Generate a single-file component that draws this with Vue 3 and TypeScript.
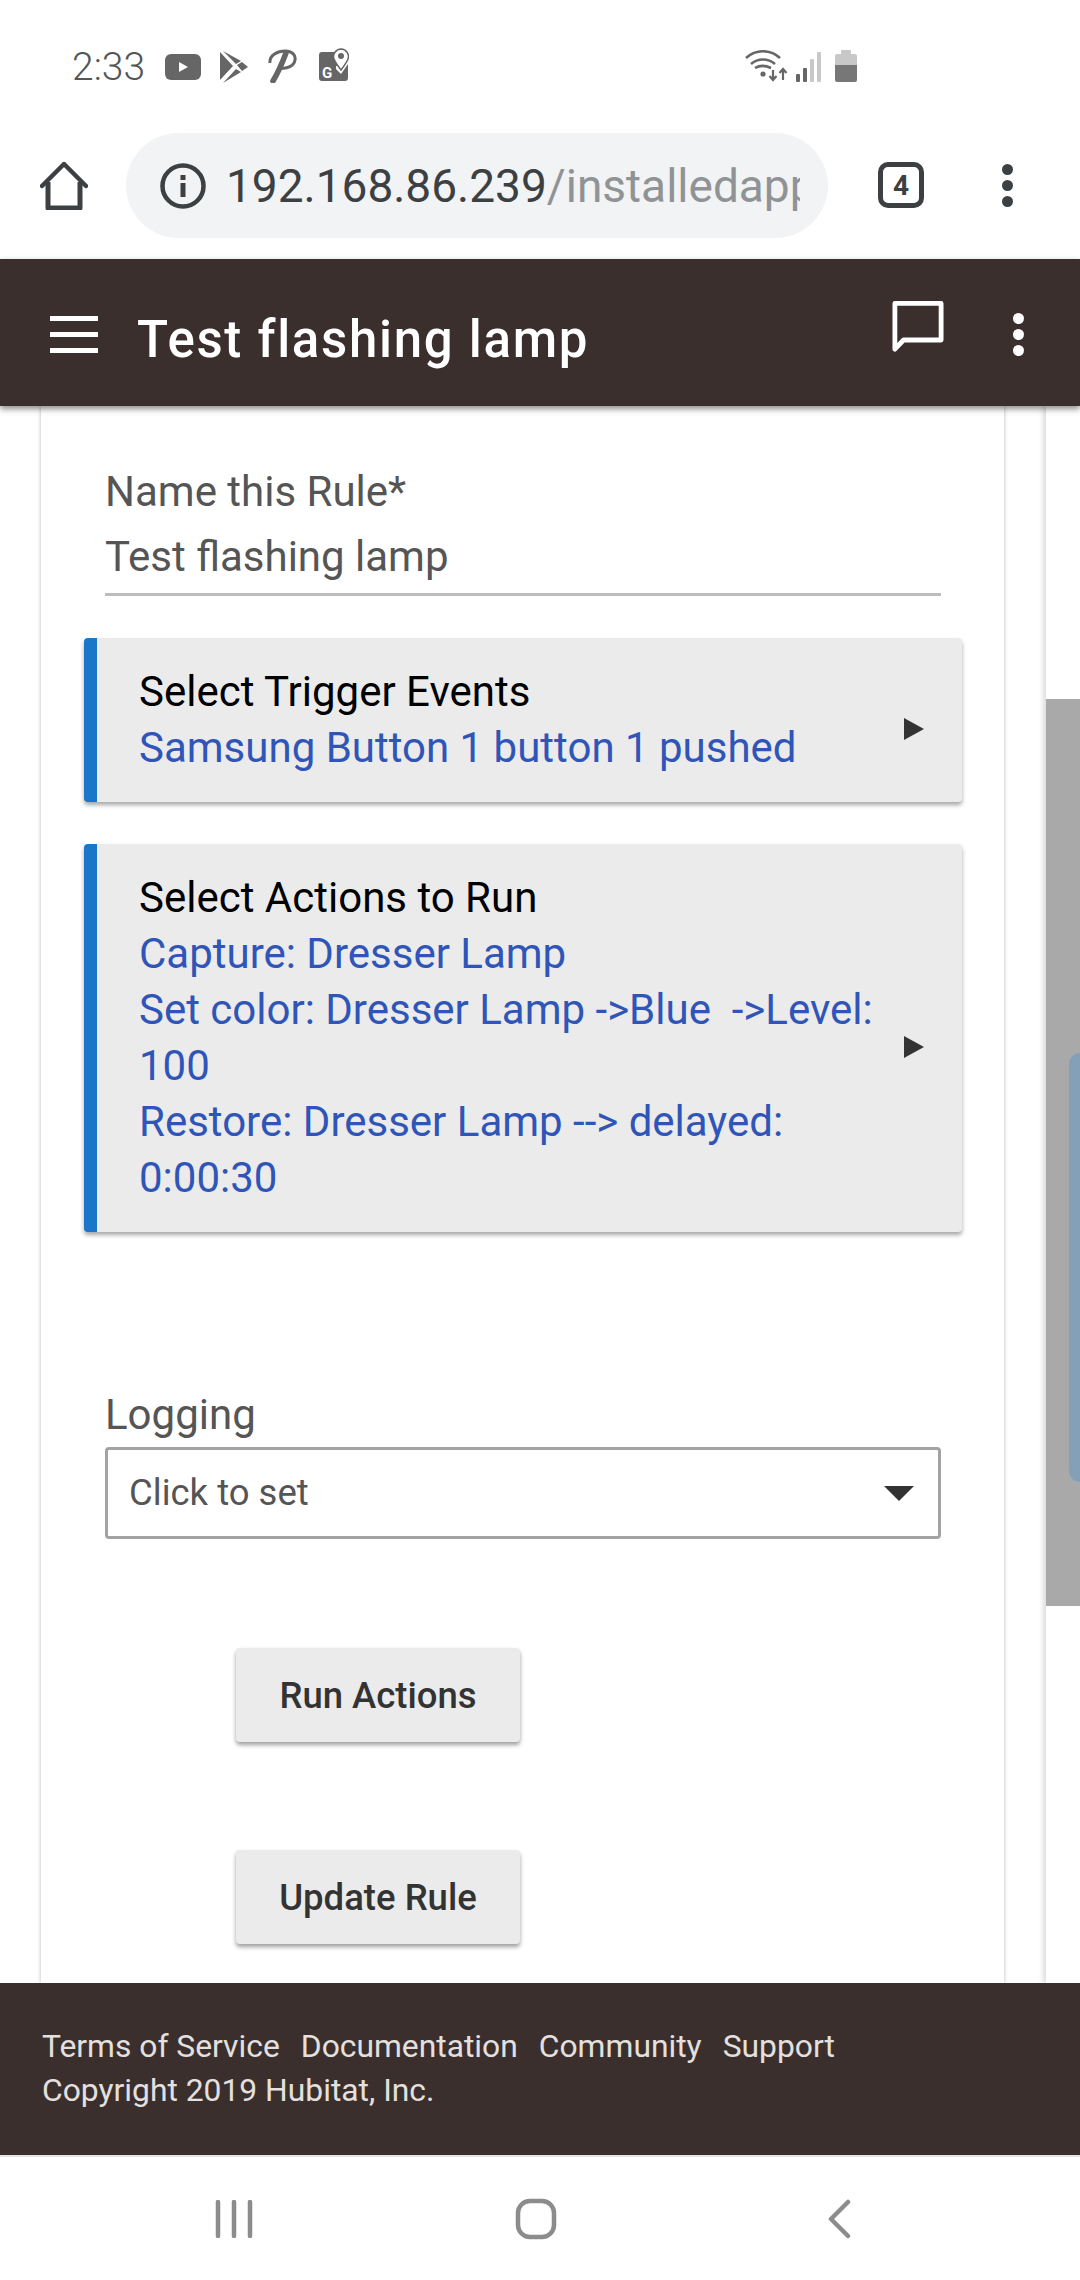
<template>
  <div class="screen">
    <div class="status-bar">
      <span class="time">2:33</span>
      <svg class="st-yt" width="36" height="26" viewBox="0 0 36 26"><rect width="36" height="26" rx="6" fill="#666"/><path d="M14 8l9 5-9 5z" fill="#fff"/></svg>
      <svg class="st-play" width="28" height="32" viewBox="0 0 28 32"><path d="M0 1l13 14L0 29z" fill="#666"/><path d="M3 0l13 13 5-3z" fill="#666"/><path d="M17 14l5-3 6 5-6 4z" fill="#666"/><path d="M3 32l13-14 5 3z" fill="#666"/></svg>
      <svg class="st-p" width="30" height="34" viewBox="0 0 30 34"><path d="M2 14C1 6 10 2 17 2c7 0 11 4 10 9-1 6-8 9-14 8" fill="none" stroke="#666" stroke-width="3"/><path d="M18 4C15 12 11 22 5 32" fill="none" stroke="#666" stroke-width="5.500" stroke-linecap="round"/></svg>
      <svg class="st-map" width="30" height="33" viewBox="0 0 30 33"><path d="M3 4h14v29H3a3 3 0 0 1-3-3V7a3 3 0 0 1 3-3zM14 18l8 8 7-10v14a3 3 0 0 1-3 3H14z" fill="#666"/><rect x="8" y="4" width="14" height="14" fill="#666"/><path d="M22 1a7.500 7.500 0 0 1 7 10c-1 3-4 7-7 11-3-4-6-8-7-11a7.500 7.500 0 0 1 7-10z" fill="#fff" stroke="#666" stroke-width="1.500"/><circle cx="22" cy="8" r="3" fill="#666"/><text x="3" y="30" class="map-g">G</text></svg>
      <div class="status-right">
        <svg width="44" height="32" viewBox="0 0 44 32"><g fill="none" stroke="#666" stroke-width="2.600"><path d="M1 8C11 -1 25 -1 35 8"/><path d="M6 14C13 8 23 8 30 14"/></g><path d="M10 18c5-3 10-3 16 0" fill="none" stroke="#666" stroke-width="2.600"/><circle cx="18" cy="24" r="2.600" fill="#666"/><path d="M28 20v9M24.500 26l3.500 4 3.500-4M38 30v-10M34.500 23l3.500-4 3.500 4" fill="none" stroke="#666" stroke-width="2.200"/></svg>
        <div class="signal"><i class="on s1"></i><i class="on s2"></i><i class="s3"></i><i class="s4"></i></div>
        <div class="battery"><i class="cap"></i><i class="cell"></i></div>
      </div>
    </div>

    <div class="toolbar">
      <svg width="48" height="48" viewBox="0 0 48 48" class="tb-home"><path d="M2 24L24 2l22 22" fill="none" stroke="#3c4043" stroke-width="4.500" stroke-linecap="round" stroke-linejoin="round"/><path d="M8 20v26h32V20" fill="none" stroke="#3c4043" stroke-width="5" stroke-linejoin="round"/></svg>
      <div class="omnibox">
        <svg width="46" height="46" viewBox="0 0 46 46"><circle cx="23" cy="23" r="20.500" fill="none" stroke="#3c4043" stroke-width="4.500"/><rect x="20.500" y="20" width="5" height="14" fill="#3c4043"/><rect x="20.500" y="12" width="5" height="5" fill="#3c4043"/></svg>
        <div class="url"><span class="host">192.168.86.239</span><span class="path">/installedapp</span></div>
      </div>
      <div class="tabs">4</div>
      <div class="dots dark"><i></i><i></i><i></i></div>
    </div>

    <header class="appbar">
      <div class="burger"><i></i><i></i><i></i></div>
      <h1 class="title">Test flashing lamp</h1>
      <svg class="chat" width="52" height="52" viewBox="0 0 54 54"><path d="M3 2.500h48v38H12L3 50z" fill="none" stroke="#fff" stroke-width="5" stroke-linejoin="round"/></svg>
      <div class="dots"><i></i><i></i><i></i></div>
    </header>

    <main class="content">
      <section class="panel">
        <div class="field">
          <label>Name this Rule*</label>
          <div class="input">Test flashing lamp</div>
        </div>

        <div v-for="card in cards" :key="card.title" class="card">
          <div class="card-text">
            <div class="card-title">{{ card.title }}</div>
            <div v-for="line in card.lines" :key="line" class="card-line">{{ line }}</div>
          </div>
          <span class="arrow"></span>
        </div>

        <div class="field logging">
          <label>Logging</label>
          <div class="select">
            <span>Click to set</span>
            <span class="caret"></span>
          </div>
        </div>

        <button class="btn run">Run Actions</button>
        <button class="btn update">Update Rule</button>
      </section>

      <aside class="track">
        <div class="thumb"><div class="mini"></div></div>
      </aside>
    </main>

    <footer class="footer">
      <div class="links">
        <a>Terms of Service</a>
        <a>Documentation</a>
        <a>Community</a>
        <a>Support</a>
      </div>
      <div>Copyright 2019 Hubitat, Inc.</div>
    </footer>

    <nav class="navbar">
      <svg width="38" height="38" viewBox="0 0 38 38"><path d="M3 2v34M19 2v34M35 2v34" stroke="#8c8c8c" stroke-width="4.500" stroke-linecap="round"/></svg>
      <svg class="nav-home" width="42" height="42" viewBox="0 0 42 42"><rect x="3" y="3" width="36" height="36" rx="12" fill="none" stroke="#8c8c8c" stroke-width="4.500"/></svg>
      <svg width="24" height="40" viewBox="0 0 24 40"><path d="M21 3L4 20l17 17" fill="none" stroke="#8c8c8c" stroke-width="4.500" stroke-linecap="round" stroke-linejoin="round"/></svg>
    </nav>
  </div>
</template>

<script setup lang="ts">
interface RuleCard {
  title: string
  lines: string[]
}

const cards: RuleCard[] = [
  {
    title: 'Select Trigger Events',
    lines: ['Samsung Button 1 button 1 pushed']
  },
  {
    title: 'Select Actions to Run',
    lines: [
      'Capture: Dresser Lamp',
      'Set color: Dresser Lamp ->Blue \u00a0->Level: 100',
      'Restore: Dresser Lamp --> delayed: 0:00:30'
    ]
  }
]
</script>

<style>
html,
body {
  margin: 0;
  background: #fff;
}
</style>

<style scoped>
.screen {
  width: 1080px;
  height: 2280px;
  display: flex;
  flex-direction: column;
  overflow: hidden;
  background: #fff;
  font-family: Roboto, "Liberation Sans", sans-serif;
}

/* status bar */
.status-bar {
  height: 133px;
  flex: none;
  display: flex;
  align-items: center;
  padding: 0 223px 0 72px;
  box-sizing: border-box;
  color: #666;
}
.time {
  font-size: 39px;
  font-weight: 300;
  width: 93px;
  color: #555;
}
.st-yt { margin-right: 19px; }
.st-play { margin-right: 20px; }
.st-p { margin-right: 21px; margin-top: -2px; }
.st-map { margin-top: -4px; }
.map-g {
  font-family: Roboto, sans-serif;
  font-size: 15px;
  font-weight: 700;
  fill: #fff;
}
.status-right {
  margin-left: auto;
  display: flex;
  align-items: flex-end;
  gap: 7px;
  margin-top: -2px;
}
.signal {
  display: flex;
  align-items: flex-end;
  gap: 3px;
  height: 30px;
  margin-right: 7px;
}
.signal i {
  width: 4px;
  background: #c8c8c8;
  border-radius: 1px;
}
.signal .on { background: #666; }
.s1 { height: 8px; }
.s2 { height: 14px; }
.s3 { height: 23px; }
.s4 { height: 30px; }
.battery {
  width: 22px;
  display: flex;
  flex-direction: column;
  align-items: center;
}
.battery .cap {
  width: 10px;
  height: 4px;
  background: #c8c8c8;
  border-radius: 1px 1px 0 0;
}
.battery .cell {
  width: 22px;
  height: 28px;
  border-radius: 2px;
  background: linear-gradient(#c8c8c8 0 11px, #777 11px);
}

/* browser toolbar */
.toolbar {
  height: 126px;
  flex: none;
  display: flex;
  align-items: flex-start;
  box-sizing: border-box;
  padding-left: 40px;
}
.tb-home { margin-top: 29px; }
.omnibox {
  width: 702px;
  height: 105px;
  margin-left: 38px;
  border-radius: 53px;
  background: #f1f3f4;
  display: flex;
  align-items: center;
  padding-left: 34px;
  box-sizing: border-box;
}
.url {
  width: 574px;
  margin-left: 20px;
  overflow: hidden;
  white-space: nowrap;
  font-size: 46px;
}
.host { color: #3c4043; }
.path { color: #8f9396; }
.tabs {
  width: 46px;
  height: 46px;
  margin: 29px 0 0 50px;
  border: 5px solid #3c4043;
  border-radius: 10px;
  box-sizing: border-box;
  display: flex;
  align-items: center;
  justify-content: center;
  font-size: 28px;
  font-weight: 700;
  color: #3c4043;
}
.dots {
  display: flex;
  flex-direction: column;
  gap: 5px;
  width: 11px;
}
.dots i {
  width: 11px;
  height: 11px;
  border-radius: 50%;
  background: #fff;
}
.dots.dark { margin: 31px 0 0 78px; }
.dots.dark i { background: #3c4043; }

/* app bar */
.appbar {
  height: 147px;
  flex: none;
  display: flex;
  align-items: center;
  background: #3a2f2d;
  box-shadow: 0 3px 6px rgba(0, 0, 0, 0.45);
  position: relative;
  z-index: 2;
  padding-left: 50px;
}
.burger {
  display: flex;
  flex-direction: column;
  gap: 11px;
  width: 48px;
  margin-top: 4px;
}
.burger i {
  height: 5px;
  background: #fff;
}
.title {
  margin: 14px 0 0 39px;
  font-size: 51px;
  font-weight: 500;
  color: #fff;
  letter-spacing: 1.7px;
}
.chat {
  margin-left: auto;
  margin-top: -12px;
}
.appbar .dots {
  margin: 4px 56px 0 69px;
}

/* scrolled page */
.content {
  flex: 1;
  min-height: 0;
  display: flex;
  overflow: hidden;
  background: #fff;
}
.panel {
  width: 963px;
  margin-left: 41px;
  padding: 58px 42px 0 43px;
  box-sizing: border-box;
  background: #fff;
  box-shadow: 0 0 4px rgba(0, 0, 0, 0.28);
  display: flex;
  flex-direction: column;
  align-items: flex-start;
}
.field {
  width: 836px;
  margin-left: 21px;
  font-size: 42px;
  line-height: 56px;
  color: #555;
}
.field label { display: block; }
.input {
  margin-top: 9px;
  padding-bottom: 8px;
  border-bottom: 3px solid #bdbdbd;
  margin-bottom: 42px;
}
.card {
  width: 878px;
  box-sizing: border-box;
  display: flex;
  align-items: center;
  padding: 26px 38px 26px 42px;
  margin-bottom: 42px;
  background: #ebebeb;
  border-left: 13px solid #1a76c8;
  border-radius: 4px;
  box-shadow: 0 3px 4px rgba(0, 0, 0, 0.35);
  font-size: 42px;
  line-height: 56px;
}
.card-text { flex: 1; }
.card-title { color: #000; }
.card-line { color: #2f55b8; }
.arrow {
  flex: none;
  margin: 18px 0 0 24px;
  border-left: 20px solid #333;
  border-top: 11px solid transparent;
  border-bottom: 11px solid transparent;
}
.logging { margin-top: 113px; }
.select {
  height: 92px;
  margin-top: 4px;
  border: 3px solid #a3a3a3;
  border-radius: 4px;
  box-sizing: border-box;
  display: flex;
  align-items: center;
  justify-content: space-between;
  padding: 0 24px 0 21px;
  font-size: 36.500px;
}
.caret {
  border-top: 15px solid #333;
  border-left: 15px solid transparent;
  border-right: 15px solid transparent;
}
.btn {
  width: 284px;
  height: 94px;
  flex: none;
  margin-left: 152px;
  border: none;
  border-radius: 4px;
  background: #ebebeb;
  box-shadow: 0 3px 4px rgba(0, 0, 0, 0.38);
  font-family: inherit;
  font-size: 36.500px;
  font-weight: 500;
  color: #333;
  padding: 0;
}
.run { margin-top: 109px; }
.update { margin-top: 108px; }

.track {
  width: 34px;
  margin-left: 42px;
  background: #fff;
  box-shadow: -3px 0 5px rgba(0, 0, 0, 0.14);
  padding-top: 293px;
  box-sizing: border-box;
}
.thumb {
  height: 907px;
  background: #a9a9a9;
  padding-top: 354px;
  box-sizing: border-box;
}
.mini {
  height: 429px;
  margin-left: 23px;
  border-radius: 12px 0 0 12px;
  background: #84a0b8;
}

.footer {
  height: 172px;
  flex: none;
  box-sizing: border-box;
  background: #3a2f2d;
  padding: 41px 0 0 42px;
  font-size: 31.800px;
  line-height: 44px;
  color: #e4e0df;
  position: relative;
  z-index: 1;
}
.links {
  display: flex;
  gap: 21px;
}

.navbar {
  height: 125px;
  flex: none;
  display: flex;
  align-items: center;
  box-sizing: border-box;
  border-top: 2px solid #e6e4e2;
  padding: 0 229px 0 215px;
  justify-content: space-between;
}
.nav-home { margin-right: 8px; }
</style>
